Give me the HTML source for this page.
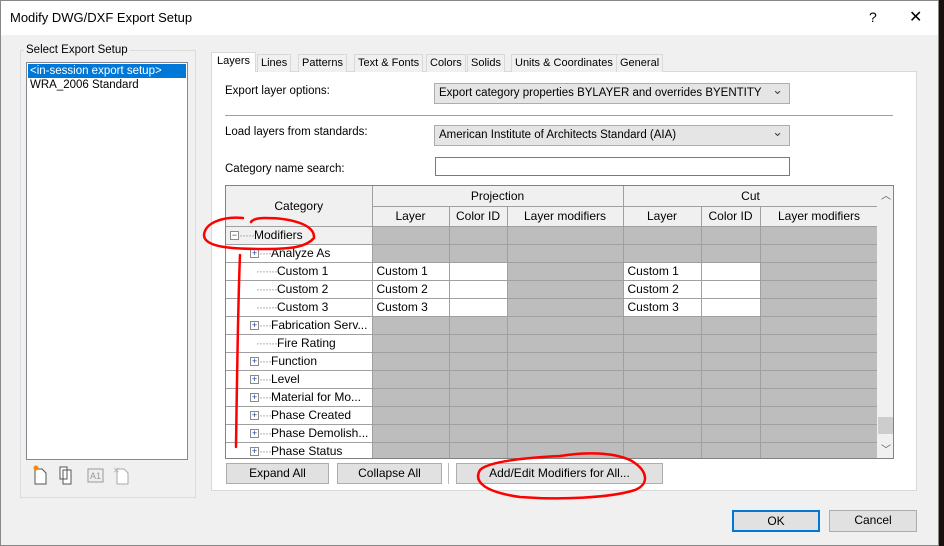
<!DOCTYPE html>
<html><head><meta charset="utf-8"><style>
*{box-sizing:border-box;margin:0;padding:0}
body{width:944px;height:546px;overflow:hidden;background:#1a0f0f;font-family:"Liberation Sans",sans-serif;font-size:12px;color:#000;position:relative}
.a{position:absolute}
#win{left:0;top:0;width:939px;height:546px;background:#f0f0f0;border:1px solid #888}
#tb{left:0;top:0;width:937px;height:34px;background:#fff}
.btn{position:absolute;background:#e1e1e1;border:1px solid #adadad;text-align:center;line-height:19px;font-size:12px}
.sel{position:absolute;background:#e5e5e5;border:1px solid #adadad;height:21px;line-height:19px;padding-left:4px;font-size:11.5px}
.sel:after{content:"⌄";position:absolute;right:6px;top:-4px;font-size:13px;color:#444}
.hatch{background-color:#bdbdbd}
table{border-collapse:collapse;table-layout:fixed}
td{height:18px;border:1px solid #a0a0a0;font-size:12px;padding-left:4px;white-space:nowrap;overflow:hidden}
th{font-weight:normal;background:#f0f0f0;border:1px solid #a0a0a0;font-size:12px;height:20px}
td.c{border:none;border-bottom:1px solid #a0a0a0;background:#fff;padding-left:0;position:relative}
.w{background:#fff}
.pl{display:inline-block;width:9px;height:9px;border:1px solid #8a8a8a;font-size:9px;line-height:7px;text-align:center;color:#1c3f9c;background:#fff;vertical-align:middle}
.d{color:#999;letter-spacing:-1px}
.tab{position:absolute;top:53px;height:18px;line-height:17px;font-size:11px;padding:0 3px;border:1px solid #d9d9d9;border-bottom:none;background:#f0f0f0}
</style></head><body>
<div id="win" class="a">
<div id="tb" class="a"><span class="a" style="left:9px;top:9px;font-size:13px">Modify DWG/DXF Export Setup</span>
<span class="a" style="left:868px;top:8px;font-size:14px">?</span><span class="a" style="left:908px;top:6px;font-size:16px">✕</span></div>
<div class="a" style="left:19px;top:49px;width:176px;height:448px;border:1px solid #dcdcdc"></div>
<span class="a" style="left:23px;top:43px;background:#f0f0f0;padding:0 2px;font-size:11.5px">Select Export Setup</span>
<div class="a" style="left:25px;top:61px;width:162px;height:398px;background:#fff;border:1px solid #828790">
<div style="margin:1px;background:#0078d7;color:#fff;height:14px;line-height:14px;padding-left:2px;font-size:11.5px">&lt;in-session export setup&gt;</div>
<div style="padding-left:3px;font-size:11.5px;line-height:13px">WRA_2006 Standard</div></div>
<svg class="a" style="left:30px;top:462px" width="100" height="24">
<path d="M4 6h7l4 4v11H4z" fill="#fff" stroke="#555"/><circle cx="5" cy="5" r="2.5" fill="#f80"/>
<path d="M29 4h7v12h-7z M32 7h8v14h-8z" fill="#fff" stroke="#555"/>
<rect x="57" y="6" width="15" height="13" fill="#eee" stroke="#999"/><text x="59" y="16" font-size="9" fill="#999" font-family="Liberation Sans">A1</text>
<path d="M86 6h7l4 4v11H86z" fill="#fff" stroke="#aaa"/><text x="82" y="10" font-size="8" fill="#aaa">✕</text></svg>
<div class="a" style="left:210px;top:70px;width:706px;height:420px;background:#fff;border:1px solid #d9d9d9"></div>
<div class="tab" style="left:210px;top:51px;height:20px;background:#fff;border-color:#d9d9d9;padding:0 5px">Layers</div>
<div class="tab" style="left:256px">Lines</div>
<div class="tab" style="left:297px">Patterns</div>
<div class="tab" style="left:353px">Text &amp; Fonts</div>
<div class="tab" style="left:425px">Colors</div>
<div class="tab" style="left:466px">Solids</div>
<div class="tab" style="left:510px">Units &amp; Coordinates</div>
<div class="tab" style="left:615px">General</div>
<span class="a" style="left:224px;top:84px;font-size:11.5px">Export layer options:</span>
<div class="sel" style="left:433px;top:82px;width:356px">Export category properties BYLAYER and overrides BYENTITY</div>
<div class="a" style="left:224px;top:114px;width:668px;height:1px;background:#a0a0a0"></div>
<span class="a" style="left:224px;top:125px;font-size:11.5px">Load layers from standards:</span>
<div class="sel" style="left:433px;top:124px;width:356px">American Institute of Architects Standard (AIA)</div>
<span class="a" style="left:224px;top:162px;font-size:11.5px">Category name search:</span>
<div class="a" style="left:434px;top:156px;width:355px;height:19px;background:#fff;border:1px solid #7a7a7a"></div>
<div class="a" style="left:224px;top:184px;width:669px;height:274px;border:1px solid #828282;overflow:hidden;background:#fff">
<table style="width:652px">
<colgroup><col style="width:146px"><col style="width:77px"><col style="width:58px"><col style="width:116px"><col style="width:78px"><col style="width:59px"><col style="width:118px"></colgroup>
<tr><th rowspan="2" style="border-left:none;border-top:none">Category</th><th colspan="3" style="border-top:none">Projection</th><th colspan="3" style="border-top:none">Cut</th></tr>
<tr><th>Layer</th><th>Color ID</th><th>Layer modifiers</th><th>Layer</th><th>Color ID</th><th>Layer modifiers</th></tr>
<tr><td class="c" style="background:#f0f0f0"><span style="margin-left:4px" class="pl">−</span><span class="d">·····</span>Modifiers</td><td class="hatch"></td><td class="hatch"></td><td class="hatch"></td><td class="hatch"></td><td class="hatch"></td><td class="hatch"></td></tr>
<tr><td class="c"><span style="margin-left:24px" class="pl">+</span><span class="d">····</span>Analyze As</td><td class="hatch"></td><td class="hatch"></td><td class="hatch"></td><td class="hatch"></td><td class="hatch"></td><td class="hatch"></td></tr>
<tr><td class="c"><span style="margin-left:30px" class="d">·······</span>Custom 1</td><td class="w">Custom 1</td><td class="w"></td><td class="hatch"></td><td class="w">Custom 1</td><td class="w"></td><td class="hatch"></td></tr>
<tr><td class="c"><span style="margin-left:30px" class="d">·······</span>Custom 2</td><td class="w">Custom 2</td><td class="w"></td><td class="hatch"></td><td class="w">Custom 2</td><td class="w"></td><td class="hatch"></td></tr>
<tr><td class="c"><span style="margin-left:30px" class="d">·······</span>Custom 3</td><td class="w">Custom 3</td><td class="w"></td><td class="hatch"></td><td class="w">Custom 3</td><td class="w"></td><td class="hatch"></td></tr>
<tr><td class="c"><span style="margin-left:24px" class="pl">+</span><span class="d">····</span>Fabrication Serv...</td><td class="hatch"></td><td class="hatch"></td><td class="hatch"></td><td class="hatch"></td><td class="hatch"></td><td class="hatch"></td></tr>
<tr><td class="c"><span style="margin-left:30px" class="d">·······</span>Fire Rating</td><td class="hatch"></td><td class="hatch"></td><td class="hatch"></td><td class="hatch"></td><td class="hatch"></td><td class="hatch"></td></tr>
<tr><td class="c"><span style="margin-left:24px" class="pl">+</span><span class="d">····</span>Function</td><td class="hatch"></td><td class="hatch"></td><td class="hatch"></td><td class="hatch"></td><td class="hatch"></td><td class="hatch"></td></tr>
<tr><td class="c"><span style="margin-left:24px" class="pl">+</span><span class="d">····</span>Level</td><td class="hatch"></td><td class="hatch"></td><td class="hatch"></td><td class="hatch"></td><td class="hatch"></td><td class="hatch"></td></tr>
<tr><td class="c"><span style="margin-left:24px" class="pl">+</span><span class="d">····</span>Material for Mo...</td><td class="hatch"></td><td class="hatch"></td><td class="hatch"></td><td class="hatch"></td><td class="hatch"></td><td class="hatch"></td></tr>
<tr><td class="c"><span style="margin-left:24px" class="pl">+</span><span class="d">····</span>Phase Created</td><td class="hatch"></td><td class="hatch"></td><td class="hatch"></td><td class="hatch"></td><td class="hatch"></td><td class="hatch"></td></tr>
<tr><td class="c"><span style="margin-left:24px" class="pl">+</span><span class="d">····</span>Phase Demolish...</td><td class="hatch"></td><td class="hatch"></td><td class="hatch"></td><td class="hatch"></td><td class="hatch"></td><td class="hatch"></td></tr>
<tr><td class="c"><span style="margin-left:24px" class="pl">+</span><span class="d">····</span>Phase Status</td><td class="hatch"></td><td class="hatch"></td><td class="hatch"></td><td class="hatch"></td><td class="hatch"></td><td class="hatch"></td></tr>
</table>
<div class="a" style="left:651px;top:0;width:17px;height:272px;background:#f0f0f0">
<span class="a" style="left:4px;top:1px;font-size:10px;color:#555">︿</span>
<div class="a" style="left:1px;top:231px;width:15px;height:17px;background:#cdcdcd"></div>
<span class="a" style="left:4px;top:255px;font-size:10px;color:#555">﹀</span></div>
</div>
<div class="btn" style="left:225px;top:462px;width:103px;height:21px">Expand All</div>
<div class="btn" style="left:336px;top:462px;width:105px;height:21px">Collapse All</div>
<div class="a" style="left:447px;top:462px;width:1px;height:21px;background:#bbb"></div>
<div class="btn" style="left:455px;top:462px;width:207px;height:21px">Add/Edit Modifiers for All...</div>
<div class="btn" style="left:731px;top:509px;width:88px;height:22px;border:2px solid #0078d7;line-height:18px">OK</div>
<div class="btn" style="left:828px;top:509px;width:88px;height:22px">Cancel</div>
</div>
<svg class="a" style="left:0;top:0" width="944" height="546" fill="none" stroke="#f00" stroke-width="2.5" stroke-linecap="round">
<path d="M243 218C225 216 205 222 204 235C204 248 235 249 265 249C295 249 307 246 314 238C315 224 290 218 265 218C258 218 253 219 251 222"/>
<path d="M240 255C238 300 237 380 236 447"/>
<path d="M560 456C520 458 488 462 480 470C473 482 485 492 520 497C560 500 610 498 635 490C650 484 648 470 630 460C612 452 585 452 560 456"/>
</svg>
</body></html>
